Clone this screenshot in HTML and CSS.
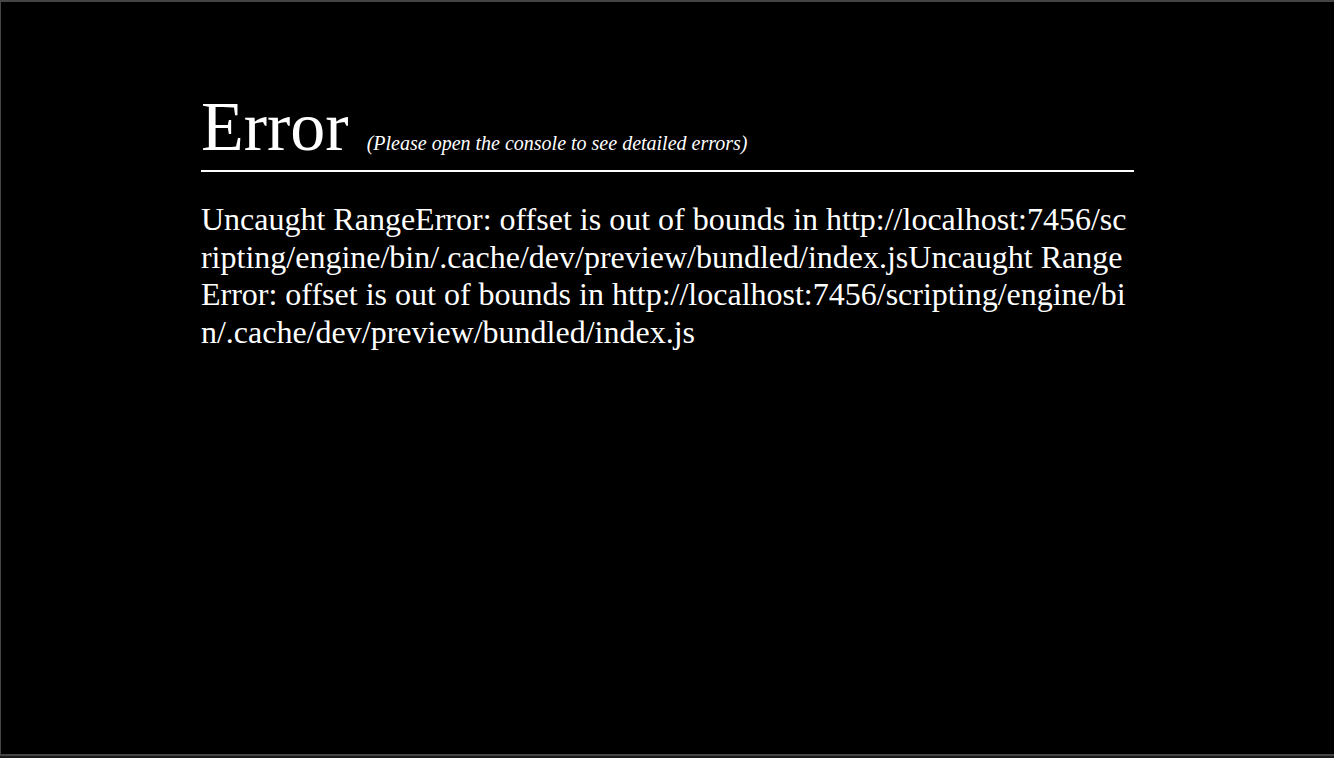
FILE: index.html
```html
<!DOCTYPE html>
<html>
<head>
<meta charset="utf-8">
<link rel="stylesheet" href="styles.css">
</head>
<body>
<div class="frame">
  <div class="content">
    <div class="header">
      <span class="title">Error</span>
      <span class="hint">(Please open the console to see detailed errors)</span>
    </div>
    <div class="message">Uncaught RangeError: offset is out of bounds in http://localhost:7456/scripting/engine/bin/.cache/dev/preview/bundled/index.jsUncaught RangeError: offset is out of bounds in http://localhost:7456/scripting/engine/bin/.cache/dev/preview/bundled/index.js</div>
  </div>
</div>
</body>
</html>
```

FILE: styles.css
```css
html, body {
  margin: 0;
  padding: 0;
  height: 100%;
  background: #1a1a1a;
}
body {
  font-family: "Liberation Serif", "Times New Roman", serif;
  color: #fff;
}
.frame {
  box-sizing: border-box;
  height: 756px;
  background: #000;
  border-top: 2px solid #454545;
  border-left: 1px solid #454545;
  border-bottom: 2px solid #454545;
  overflow: hidden;
}
.content {
  width: 70%;
  margin: 0 auto;
  padding-top: 90px;
}
.header {
  border-bottom: 2px solid #fff;
  padding-bottom: 8px;
  line-height: 1;
  display: flex;
  align-items: baseline;
  gap: 18px;
}
.title {
  font-size: 70px;
}
.hint {
  font-size: 20px;
  font-style: italic;
}
.message {
  margin-top: 29px;
  font-size: 32px;
  line-height: 37.5px;
  word-break: break-all;
}
```
